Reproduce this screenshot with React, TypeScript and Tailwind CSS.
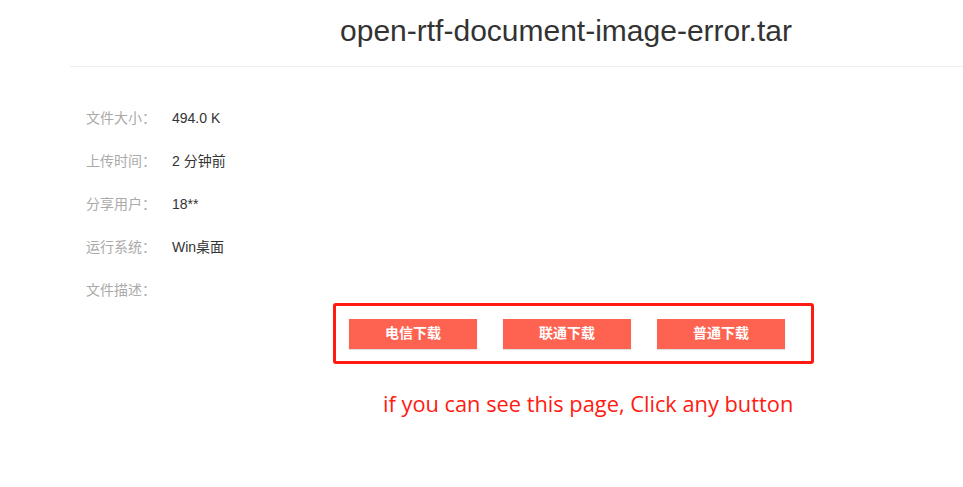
export default function App() {
  const rows = [
    { label: "文件大小：", value: "494.0 K" },
    { label: "上传时间：", value: "2 分钟前" },
    { label: "分享用户：", value: "18**" },
    { label: "运行系统：", value: "Win桌面" },
  ]

  return (
    <div className="w-[963px] h-[487px] overflow-hidden bg-white font-['Liberation_Sans','Noto_Sans_CJK_SC',sans-serif]">
      <div className="ml-[70px] w-[992px]">
        {/* Title */}
        <div className="h-[67px] border-b border-[#eeeeee] flex items-center justify-center">
          <h1 className="text-[30px] text-[#333333] leading-none pb-[5px]">open-rtf-document-image-error.tar</h1>
        </div>

        {/* File info */}
        <div className="pt-[30px] pl-[16px] text-[14px]">
          {rows.map((r) => (
            <div key={r.label} className="h-[43px] flex items-center">
              <span className="w-[86px] text-[#aaaaaa]">{r.label}</span>
              <span className="text-[#333333]">{r.value}</span>
            </div>
          ))}
          <div className="flex items-start">
            <span className="w-[86px] text-[#aaaaaa] leading-[43px]">文件描述：</span>
            <div className="ml-[161px] mt-[34px]">
              <div className="w-[481px] h-[61px] border-[3px] border-[#ff1a12] rounded-[3px] flex items-center gap-[26px] pl-[13px]">
                <button className="w-[128px] h-[30px] bg-[#fe6352] text-white font-bold text-[14px] shadow-[0_1px_1px_rgba(0,0,0,0.12)]">电信下载</button>
                <button className="w-[128px] h-[30px] bg-[#fe6352] text-white font-bold text-[14px] shadow-[0_1px_1px_rgba(0,0,0,0.12)]">联通下载</button>
                <button className="w-[128px] h-[30px] bg-[#fe6352] text-white font-bold text-[14px] shadow-[0_1px_1px_rgba(0,0,0,0.12)]">普通下载</button>
              </div>
              <p className="mt-[25px] ml-[50px] text-[21.8px] leading-[30px] text-[#ff1a12] font-['Open_Sans',sans-serif]">
                if you can see this page, Click any button
              </p>
            </div>
          </div>
        </div>
      </div>
    </div>
  )
}
